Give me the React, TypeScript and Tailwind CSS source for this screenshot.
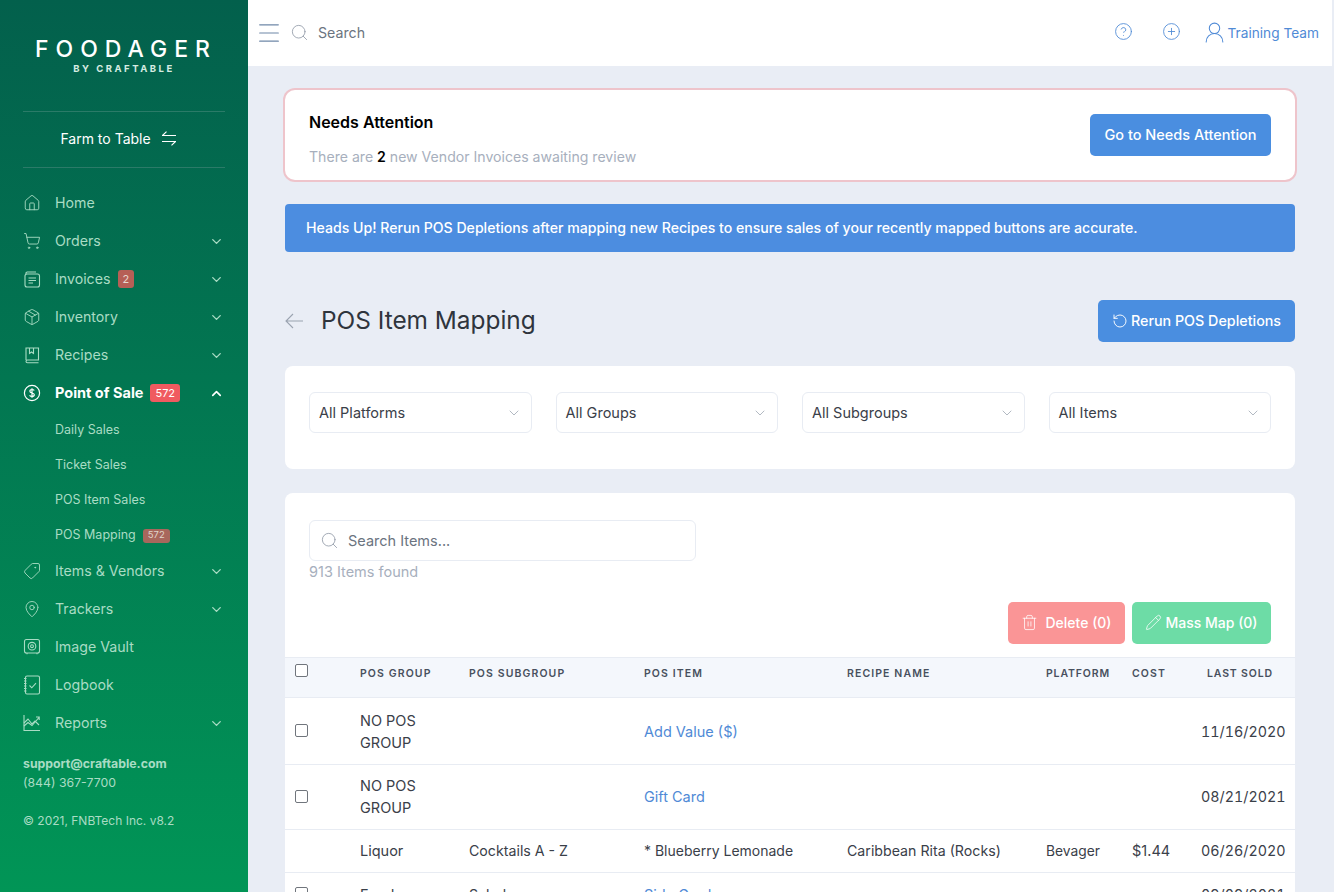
import React from "react";
import { ChevronDown, ChevronUp, Search, Menu, CircleHelp, CirclePlus, UserRound, RotateCcw, Trash2, Pencil, House, ShoppingCart, Package, Tag, MapPin } from "lucide-react";

const ic = { size: 18, strokeWidth: 1.2 };

const Doc = () => (
  <svg width="18" height="18" viewBox="0 0 18 18" fill="none" stroke="currentColor" strokeWidth="1.1">
    <path d="M3 4.5V3.2C3 2.5 3.5 2 4.2 2H13" />
    <rect x="2" y="4" width="14.5" height="13" rx="2" />
    <path d="M5.5 8h7.5M5.5 10.5h7.5M5.5 13h4.5" />
  </svg>
);
const BookI = () => (
  <svg width="18" height="18" viewBox="0 0 18 18" fill="none" stroke="currentColor" strokeWidth="1.1">
    <path d="M3 14V2h12.5v12H4.5C3.5 14 3 14.6 3 15.3S3.5 16.7 4.5 16.7h11" />
    <path d="M6.5 2v5.5L8.5 6l2 1.5V2" />
  </svg>
);
const Dollar = () => (
  <svg width="18" height="18" viewBox="0 0 18 18" fill="none" stroke="currentColor" strokeWidth="1.2">
    <circle cx="9" cy="9" r="7.6" />
    <path d="M11.2 6.6C10.8 5.8 10 5.5 9 5.5c-1.2 0-2.1.6-2.1 1.7 0 2.4 4.4 1.2 4.4 3.6 0 1.1-1 1.7-2.3 1.7-1.1 0-2-.4-2.4-1.2M9 4.3v9.4" />
  </svg>
);
const Vault = () => (
  <svg width="18" height="18" viewBox="0 0 18 18" fill="none" stroke="currentColor" strokeWidth="1.1">
    <rect x="1.5" y="1.5" width="15" height="13.5" rx="2" />
    <circle cx="9" cy="8.2" r="3.8" />
    <circle cx="9" cy="8.2" r="1.4" />
    <path d="M4 15v1.2M14 15v1.2" />
  </svg>
);
const Log = () => (
  <svg width="18" height="20" viewBox="0 0 18 20" fill="none" stroke="currentColor" strokeWidth="1.1">
    <rect x="2.5" y="1" width="14" height="18" rx="1.5" />
    <path d="M1 3.5h2.5M1 6h2.5M1 8.5h2.5M1 11h2.5M1 13.5h2.5M1 16h2.5" />
    <path d="M6.5 10.5l2.3 2.3 4.2-4.6" />
  </svg>
);
const Rep = () => (
  <svg width="18" height="18" viewBox="0 0 18 18" fill="none" stroke="currentColor" strokeWidth="1.1">
    <path d="M1 1v15.5h16" />
    <path d="M1 9l4-4 4 5 3-3 4 4" />
    <path d="M1 12l4-3.5 4 3 7-8M13 3h3.2v3" />
  </svg>
);
const Swap = () => (
  <svg width="16" height="15" viewBox="0 0 16 15" fill="none" stroke="currentColor" strokeWidth="1.1">
    <path d="M1 4.5h14M5.5 0.7L1.5 4.5" />
    <path d="M15 10.5H1M10.5 14.3l4-3.8" />
  </svg>
);
const Back = () => (
  <svg width="18" height="16" viewBox="0 0 18 16" fill="none" stroke="currentColor" strokeWidth="1.1" className="text-[#9aa3b0]">
    <path d="M18 8H1M8 1L1 8l7 7" />
  </svg>
);

type Item = { label: string; icon: React.ReactNode; chev?: boolean; badge?: string };
const top: Item[] = [
  { label: "Home", icon: <House {...ic} /> },
  { label: "Orders", icon: <ShoppingCart {...ic} />, chev: true },
  { label: "Invoices", icon: <Doc />, chev: true, badge: "2" },
  { label: "Inventory", icon: <Package {...ic} />, chev: true },
  { label: "Recipes", icon: <BookI />, chev: true },
];
const bottom: Item[] = [
  { label: "Items & Vendors", icon: <Tag {...ic} className="-scale-x-100" />, chev: true },
  { label: "Trackers", icon: <MapPin {...ic} />, chev: true },
  { label: "Image Vault", icon: <Vault /> },
  { label: "Logbook", icon: <Log /> },
  { label: "Reports", icon: <Rep />, chev: true },
];

const NavRow = ({ it }: { it: Item }) => (
  <div className="flex h-[38px] items-center pl-[23px] pr-[24px] text-[#a9dcc4]">
    <span className="flex w-[32px] shrink-0 items-center">{it.icon}</span>
    <span className="text-[14.2px]">{it.label}</span>
    {it.badge && (
      <span className="ml-[7px] flex h-[18px] items-center rounded-[3px] bg-[#b65f56] px-[5px] text-[11px] text-[#e8d8cf]">{it.badge}</span>
    )}
    {it.chev && <ChevronDown size={15} strokeWidth={2.2} className="ml-auto" />}
  </div>
);

const Sub = ({ label, badge }: { label: string; badge?: string }) => (
  <div className="flex h-[35px] items-center pl-[55px] pt-[2px] text-[12.5px] text-[#a9dcc4]">
    {label}
    {badge && <span className="ml-[7px] flex h-[14px] items-center rounded-[3px] bg-[#a8675c] px-[5px] text-[9.5px] text-[#e0d6cc]">{badge}</span>}
  </div>
);

const Sidebar = () => (
  <aside className="flex w-[248px] shrink-0 flex-col bg-gradient-to-b from-[#03604c] to-[#019556]">
    <div className="flex h-[111px] flex-col items-center pt-[36px] text-white">
      <div className="pl-[4px] text-[23px] font-medium leading-[26px] tracking-[7px]">FOODAGER</div>
      <div className="mt-[1px] text-[9.5px] font-bold leading-[11px] tracking-[2.5px] text-[#d6ece2]">BY CRAFTABLE</div>
    </div>
    <div className="mx-[23px] flex h-[57px] items-center justify-center gap-[10px] border-y border-[#2b7b68] pb-[2px] pr-[11px] text-[14px] text-white">
      Farm to Table <Swap />
    </div>
    <div className="mt-[16px]">
      {top.map((it) => <NavRow key={it.label} it={it} />)}
      <div className="flex h-[38px] items-center pl-[23px] pr-[24px] font-bold text-white">
        <span className="flex w-[32px] shrink-0 items-center"><Dollar /></span>
        <span className="text-[14.5px]">Point of Sale</span>
        <span className="ml-[7px] flex h-[18px] items-center rounded-[3px] bg-[#f05a60] px-[5px] text-[11px] font-normal">572</span>
        <ChevronUp size={15} strokeWidth={2.6} className="ml-auto" />
      </div>
      <Sub label="Daily Sales" />
      <Sub label="Ticket Sales" />
      <Sub label="POS Item Sales" />
      <Sub label="POS Mapping" badge="572" />
      {bottom.map((it) => <NavRow key={it.label} it={it} />)}
    </div>
    <div className="mt-[12px] pl-[23px] text-[#a9dcc4]">
      <div className="text-[12.3px] font-bold leading-[20px]">support@craftable.com</div>
      <div className="text-[12.3px] leading-[18px]">(844) 367-7700</div>
      <div className="mt-[19px] text-[12px] leading-[19px]">© 2021, FNBTech Inc. v8.2</div>
    </div>
  </aside>
);

const Topbar = () => (
  <header className="mr-[2px] flex h-[66px] shrink-0 items-center bg-white pl-[7px] pr-[13px]">
    <Menu size={28} strokeWidth={1} className="text-[#6f88a8]" />
    <Search size={19} strokeWidth={1} className="mb-[2px] ml-[7px] text-[#8b95a3]" />
    <span className="ml-[9px] text-[14.2px] text-[#6b7480]">Search</span>
    <div className="ml-auto flex items-center text-[#4f8ad6]">
      <CircleHelp size={19} strokeWidth={1.1} className="mb-[3px]" />
      <CirclePlus size={19} strokeWidth={1.1} className="mb-[3px] ml-[29px]" />
      <UserRound size={25} strokeWidth={1} className="mb-[2px] ml-[21.5px]" />
      <span className="text-[13.7px]">Training Team</span>
    </div>
  </header>
);

const Sel = ({ label }: { label: string }) => (
  <div className="flex h-[41px] flex-1 items-center justify-between rounded-[6px] border border-[#e8ecf3] pl-[9px] pr-[9px] text-[14.5px] text-[#3a4049]">
    {label}
    <ChevronDown size={16} strokeWidth={1} className="text-[#8b95a3]" />
  </div>
);

const th = "px-[10px] pb-[8px] text-left text-[10.5px] font-semibold text-[#48505e]";
const td = "px-[10px] leading-[22px] text-[#3a4049]";
const Cb = () => <span className="block h-[13px] w-[13px] rounded-[2px] border border-[#70757c] bg-white" />;

type Row = { g: string; s?: string; i: string; r?: string; p?: string; c?: string; d: string; cb: boolean; link: boolean; h: string };
const rows: Row[] = [
  { g: "NO POS GROUP", i: "Add Value ($)", d: "11/16/2020", cb: true, link: true, h: "h-[65px]" },
  { g: "NO POS GROUP", i: "Gift Card", d: "08/21/2021", cb: true, link: true, h: "h-[65px]" },
  { g: "Liquor", s: "Cocktails A - Z", i: "* Blueberry Lemonade", r: "Caribbean Rita (Rocks)", p: "Bevager", c: "$1.44", d: "06/26/2020", cb: false, link: false, h: "h-[43px]" },
  { g: "Food", s: "Salads", i: "Side Garden", d: "09/09/2021", cb: true, link: true, h: "h-[44px]" },
];

export default function App() {
  return (
    <div className="flex h-[892px] w-[1334px] overflow-hidden bg-[#e9edf5] font-['Inter',sans-serif]">
      <Sidebar />
      <main className="flex min-w-0 flex-1 flex-col">
        <Topbar />
        <div className="pl-[37px] pr-[39px] pt-[24px]">
          <section className="flex h-[90px] items-center justify-between rounded-[10px] bg-white pl-[24px] pr-[24px] ring-2 ring-[#eec4cb]">
            <div className="mt-[8px]">
              <div className="text-[16px] font-semibold leading-[22px] text-black">Needs Attention</div>
              <div className="mt-[14px] text-[14.1px] leading-[20px] text-[#a7afbd]">There are <b className="font-semibold text-black">2</b> new Vendor Invoices awaiting review</div>
            </div>
            <button className="flex h-[42px] w-[181px] items-center justify-center rounded-[5px] bg-[#4a8ee0] text-[14.5px] font-medium text-white">Go to Needs Attention</button>
          </section>
          <div className="mt-[24px] flex h-[48px] items-center rounded-[4px] bg-[#4c8de0] pl-[21px] text-[14.12px] font-medium text-white">
            Heads Up! Rerun POS Depletions after mapping new Recipes to ensure sales of your recently mapped buttons are accurate.
          </div>
          <div className="mt-[48px] flex h-[42px] items-center">
            <Back />
            <h1 className="mb-[1px] ml-[18px] text-[24.4px] font-normal text-[#2f353d]">POS Item Mapping</h1>
            <button className="ml-auto flex h-[42px] w-[197px] items-center justify-center gap-[3px] rounded-[5px] bg-[#4a8ee0] text-[14.3px] font-medium text-white">
              <RotateCcw size={16} strokeWidth={1.4} /> Rerun POS Depletions
            </button>
          </div>
          <section className="mt-[24px] flex h-[103px] gap-[24px] rounded-[8px] bg-white px-[24px] pt-[26px]">
            <Sel label="All Platforms" />
            <Sel label="All Groups" />
            <Sel label="All Subgroups" />
            <Sel label="All Items" />
          </section>
          <section className="mt-[24px] rounded-t-[8px] bg-white pt-[27px]">
            <div className="px-[24px]">
              <div className="flex h-[41px] w-[387px] items-center rounded-[6px] border border-[#e8ecf3] pl-[10px] text-[14.5px] text-[#6b7480]">
                <Search size={19} strokeWidth={1} className="text-[#8b95a3]" />
                <span className="ml-[9px]">Search Items...</span>
              </div>
              <div className="mt-[1px] text-[14.5px] leading-[20px] text-[#a7afbd]">913 Items found</div>
              <div className="mt-[20px] flex justify-end gap-[7px]">
                <button className="flex h-[42px] w-[117px] items-center justify-center gap-[7px] rounded-[5px] bg-[#fa9596] pb-[1px] text-[14px] font-medium text-white">
                  <Trash2 size={17} strokeWidth={1.1} /> Delete (0)
                </button>
                <button className="flex h-[42px] w-[139px] items-center justify-center gap-[3px] rounded-[5px] bg-[#6ddca6] pb-[1px] text-[14px] font-medium text-white">
                  <Pencil size={17} strokeWidth={1.1} /> Mass Map (0)
                </button>
              </div>
            </div>
            <table className="mt-[13px] w-full table-fixed border-collapse">
              <colgroup>
                <col className="w-[65px]" />
                <col className="w-[109px]" />
                <col className="w-[175px]" />
                <col className="w-[203px]" />
                <col className="w-[199px]" />
                <col className="w-[86px]" />
                <col className="w-[69px]" />
                <col className="w-[104px]" />
              </colgroup>
              <thead>
                <tr className="h-[40px] border-y border-[#e8ecf3] bg-[#f4f7fc]">
                  <th className="px-[10px] pb-[14px] text-left"><Cb /></th>
                  <th className={`${th} tracking-[1.1px]`}>POS GROUP</th>
                  <th className={`${th} tracking-[1.1px]`}>POS SUBGROUP</th>
                  <th className={`${th} tracking-[1.1px]`}>POS ITEM</th>
                  <th className={`${th} tracking-[1.1px]`}>RECIPE NAME</th>
                  <th className={`${th} tracking-[0.85px]`}>PLATFORM</th>
                  <th className={`${th} tracking-[1.1px]`}>COST</th>
                  <th className={`${th} pl-[16px] tracking-[0.85px]`}>LAST SOLD</th>
                </tr>
              </thead>
              <tbody>
                <tr className="h-[2px]" />
                {rows.map((r, i) => (
                  <tr key={i} className={`${r.h} border-b border-[#e8ecf3]`}>
                    <td className="px-[10px] pb-[2px]">{r.cb && <Cb />}</td>
                    <td className={`${td} text-[14.5px]`}>{r.g}</td>
                    <td className={`${td} text-[14.2px]`}>{r.s}</td>
                    <td className={`${td} ${r.link ? "text-[14.5px] text-[#4f8ad6]" : "text-[14px]"}`}>{r.i}</td>
                    <td className={`${td} text-[14.2px]`}>{r.r}</td>
                    <td className={`${td} text-[13.8px]`}>{r.p}</td>
                    <td className={`${td} text-[14.5px]`}>{r.c}</td>
                    <td className={`${td} text-[14.3px] tabular-nums`}>{r.d}</td>
                  </tr>
                ))}
              </tbody>
            </table>
          </section>
        </div>
      </main>
    </div>
  );
}
